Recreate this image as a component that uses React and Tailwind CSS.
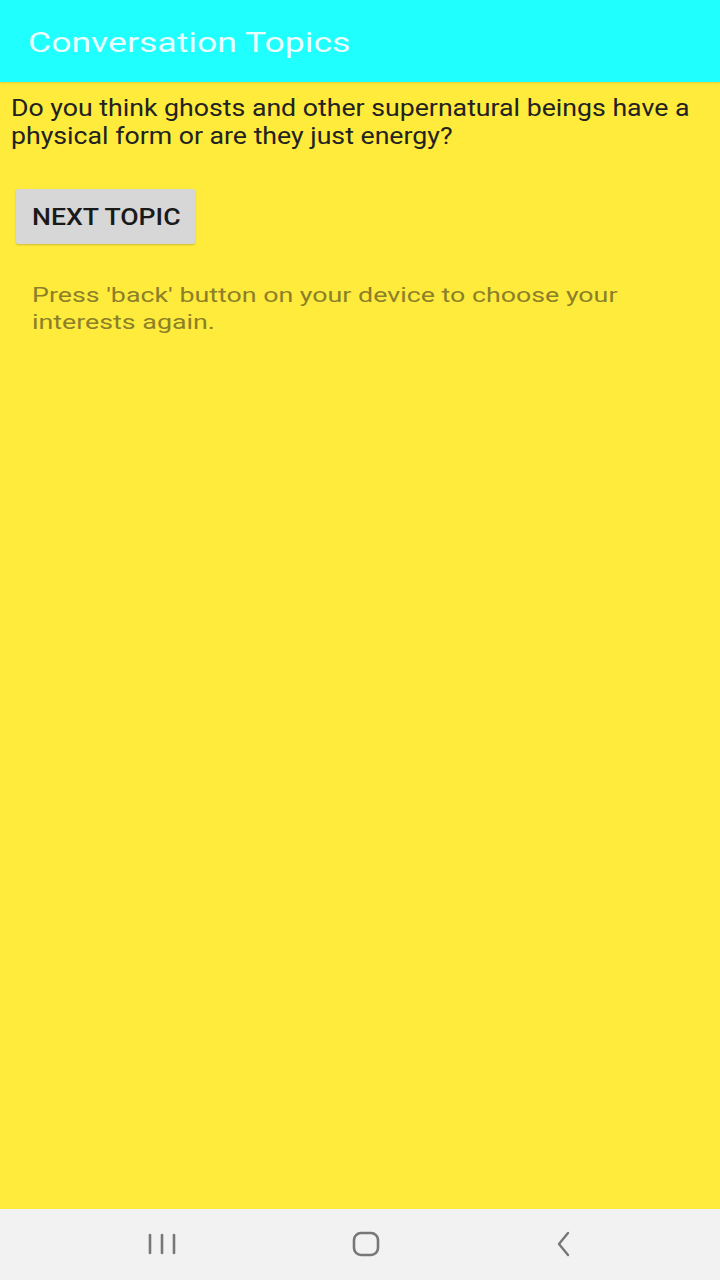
export default function App() {
  return (
    <div className="w-[720px] h-[1280px] flex flex-col bg-[#ffeb3b] overflow-hidden" style={{ fontFamily: "Roboto, 'Noto Sans', sans-serif" }}>
      <div className="h-[82px] bg-[#1ffffe] flex items-center pl-[28px] pt-[4px] shrink-0 shadow-[0_1px_2px_rgba(0,0,0,0.12)]">
        <span className="block text-[28px] text-[#e8fdfd] font-normal leading-none origin-left scale-x-[1.27] whitespace-nowrap">Conversation Topics</span>
      </div>
      <div className="flex-1 flex flex-col">
        <div className="pl-[11px] pt-[13px]">
          <p className="text-[23px] leading-[28px] text-[#222] origin-left scale-x-[1.16] whitespace-nowrap">
            Do you think ghosts and other supernatural beings have a
            <br />
            physical form or are they just energy?
          </p>
        </div>
        <div className="pl-[16px] pt-[38px]">
          <button className="w-[179px] h-[55px] bg-[#d7d7d7] rounded-[2px] shadow-[0_1px_2px_rgba(0,0,0,0.2)] text-[24px] font-medium text-[#1a1a1a] flex items-center justify-start pl-[16px]">
            <span className="block origin-left scale-x-[1.11] whitespace-nowrap leading-none">NEXT TOPIC</span>
          </button>
        </div>
        <div className="pl-[32px] pt-[38px]">
          <p className="text-[21px] leading-[27px] text-[#8c7f2a] origin-left scale-x-[1.275] whitespace-nowrap">
            Press 'back' button on your device to choose your
            <br />
            interests again.
          </p>
        </div>
      </div>
      <div className="h-[71px] bg-[#f2f2f2] shrink-0 flex items-center justify-center gap-[174px] pb-[2px]">
        <svg width="30" height="24" viewBox="0 0 30 24">
          <g stroke="#777" strokeWidth="2.6" strokeLinecap="round">
            <line x1="3" y1="3" x2="3" y2="21" />
            <line x1="15" y1="3" x2="15" y2="21" />
            <line x1="27" y1="3" x2="27" y2="21" />
          </g>
        </svg>
        <svg width="30" height="26" viewBox="0 0 30 26">
          <rect x="3" y="2" width="24" height="22" rx="7" fill="none" stroke="#777" strokeWidth="2.6" />
        </svg>
        <svg width="18" height="26" viewBox="0 0 18 26">
          <polyline points="13,2 4,13 13,24" fill="none" stroke="#777" strokeWidth="2.4" strokeLinecap="round" strokeLinejoin="round" />
        </svg>
      </div>
    </div>
  );
}
